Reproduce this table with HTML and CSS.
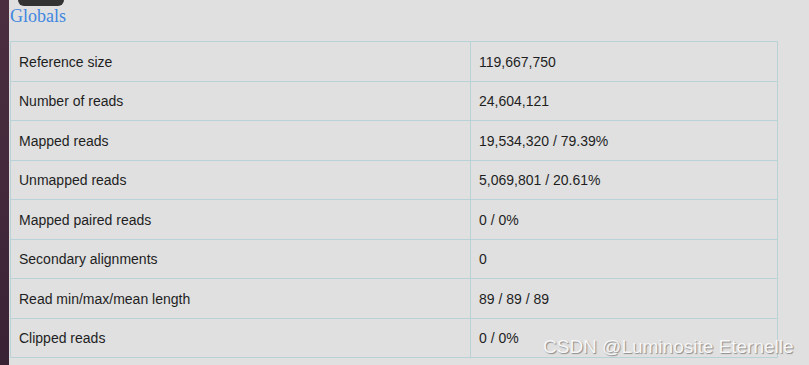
FILE: index.html
```html
<!DOCTYPE html>
<html>
<head>
<meta charset="utf-8">
<link rel="stylesheet" href="styles.css">
</head>
<body>
<div class="page">
  <div class="strip"></div>
  <div class="content">
    <div class="tab-handle"></div>
    <h2 class="title">Globals</h2>
    <table class="stats">
      <tr><td class="k">Reference size</td><td>119,667,750</td></tr>
      <tr><td class="k">Number of reads</td><td>24,604,121</td></tr>
      <tr><td class="k">Mapped reads</td><td>19,534,320 / 79.39%</td></tr>
      <tr><td class="k">Unmapped reads</td><td>5,069,801 / 20.61%</td></tr>
      <tr><td class="k">Mapped paired reads</td><td>0 / 0%</td></tr>
      <tr><td class="k">Secondary alignments</td><td>0</td></tr>
      <tr><td class="k">Read min/max/mean length</td><td>89 / 89 / 89</td></tr>
      <tr><td class="k">Clipped reads</td><td>0 / 0%</td></tr>
    </table>
  </div>
  <div class="watermark">CSDN @Luminosite Eternelle</div>
</div>
</body>
</html>
```

FILE: styles.css
```css
html, body {
  margin: 0;
  padding: 0;
  background: #e0e0e0;
}
.page {
  position: relative;
  display: flex;
  width: 809px;
  height: 365px;
  overflow: hidden;
}
.strip {
  width: 9px;
  flex: none;
  background: linear-gradient(#4b2f40, #3a2235);
}
.content {
  position: relative;
  padding-left: 1px;
}
.tab-handle {
  position: absolute;
  left: 9px;
  top: -6px;
  width: 46px;
  height: 12px;
  background: #333;
  border-radius: 6px;
}
.title {
  margin: 0;
  height: 41px;
  font-family: "Liberation Serif", serif;
  font-weight: normal;
  font-size: 18px;
  line-height: 32px;
  color: #3f87e0;
  box-sizing: border-box;
}
.stats {
  border-collapse: collapse;
  width: 768px;
  font-family: "Liberation Sans", Arial, sans-serif;
  font-size: 14px;
  color: #1e1e1e;
}
.stats td {
  border: 1px solid #b9d2d8;
  padding: 11.5px 8px 10.5px 8px;
  line-height: 16.5px;
}
.stats td.k {
  width: 443px;
}
.watermark {
  position: absolute;
  left: 543px;
  top: 336px;
  font-family: "Liberation Sans", Arial, sans-serif;
  font-size: 19px;
  color: #f6f6f6;
  text-shadow: 1px 1px 1px #8a8a8a;
  white-space: nowrap;
}
```
